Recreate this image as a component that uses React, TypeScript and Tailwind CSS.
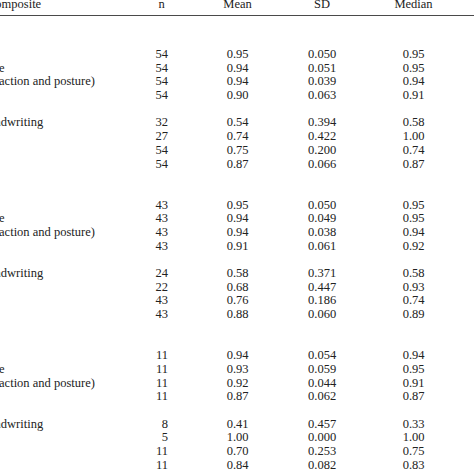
const groups = [
  [
    ["54", "0.95", "0.050", "0.95"],
    ["54", "0.94", "0.051", "0.95"],
    ["54", "0.94", "0.039", "0.94"],
    ["54", "0.90", "0.063", "0.91"],
    ["32", "0.54", "0.394", "0.58"],
    ["27", "0.74", "0.422", "1.00"],
    ["54", "0.75", "0.200", "0.74"],
    ["54", "0.87", "0.066", "0.87"],
  ],
  [
    ["43", "0.95", "0.050", "0.95"],
    ["43", "0.94", "0.049", "0.95"],
    ["43", "0.94", "0.038", "0.94"],
    ["43", "0.91", "0.061", "0.92"],
    ["24", "0.58", "0.371", "0.58"],
    ["22", "0.68", "0.447", "0.93"],
    ["43", "0.76", "0.186", "0.74"],
    ["43", "0.88", "0.060", "0.89"],
  ],
  [
    ["11", "0.94", "0.054", "0.94"],
    ["11", "0.93", "0.059", "0.95"],
    ["11", "0.92", "0.044", "0.91"],
    ["11", "0.87", "0.062", "0.87"],
    ["8", "0.41", "0.457", "0.33"],
    ["5", "1.00", "0.000", "1.00"],
    ["11", "0.70", "0.253", "0.75"],
    ["11", "0.84", "0.082", "0.83"],
  ],
];

const cols = "grid grid-cols-[130px_63px_89px_80px_103px_9px]";

function Label({ i }: { i: number }) {
  if (i === 1) return <span className="-ml-[1px]">e</span>;
  if (i === 2) return <span className="-ml-[28px]">(interaction and posture)</span>;
  if (i === 4) return <span className="-ml-[20px]">Handwriting</span>;
  return null;
}

function Row({ r, i }: { r: string[]; i: number }) {
  return (
    <div className={`${cols} h-[13.7px] leading-[13.7px]`}>
      <div className="whitespace-nowrap overflow-visible">
        <Label i={i} />
      </div>
      <div className="flex justify-center">
        <span className="w-[13px] text-right">{r[0]}</span>
      </div>
      <div className="flex justify-center">
        <span className="w-[22px] text-right">{r[1]}</span>
      </div>
      <div className="flex justify-center">
        <span className="w-[28px] text-right">{r[2]}</span>
      </div>
      <div className="flex justify-center">
        <span className="w-[22px] text-right">{r[3]}</span>
      </div>
      <div />
    </div>
  );
}

export default function App() {
  return (
    <div
      className="w-[474px] h-[474px] overflow-hidden bg-white text-[#222] text-[12.5px]"
      style={{ fontFamily: '"Liberation Serif", "Times New Roman", serif' }}
    >
      {/* Header */}
      <div className={`${cols} -mt-[2px] h-[18px] leading-[13.7px] border-b border-[#4a4a4a]`}>
        <div className="whitespace-nowrap">
          <span className="-ml-[13px]">Composite</span>
        </div>
        <div className="text-center">n</div>
        <div className="text-center">Mean</div>
        <div className="text-center">SD</div>
        <div className="text-center">Median</div>
        <div />
      </div>

      <div className="pt-[32px] flex flex-col">
        {groups.map((g, gi) => (
          <div key={gi} className="flex flex-col pb-[27.4px]">
            {g.slice(0, 4).map((r, i) => (
              <Row key={i} r={r} i={i} />
            ))}
            <div className="h-[13.7px]" />
            {g.slice(4).map((r, i) => (
              <Row key={i} r={r} i={i + 4} />
            ))}
          </div>
        ))}
      </div>
    </div>
  );
}
